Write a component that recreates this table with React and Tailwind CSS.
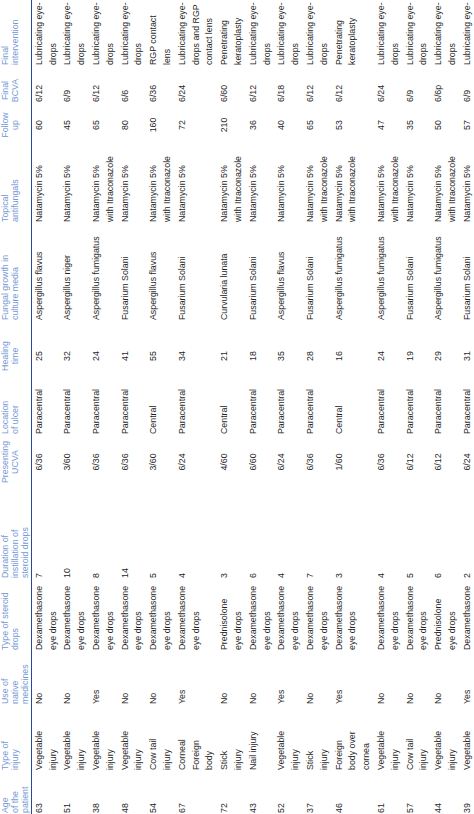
import React from "react";

const D = ["Dexamethasone", "eye drops"];
const P = ["Prednisolone", "eye drops"];
const VI = ["Vegetable", "injury"];
const NAT = ["Natamycin 5%"];
const NATI = ["Natamycin 5%", "with Itraconazole"];
const LUB = ["Lubricating eye-", "drops"];
const PK = ["Penetrating", "keratoplasty"];

const rows = [
  ["63", VI, "No", D, "7", "6/36", "Paracentral", "25", "Aspergillus flavus", NAT, "60", "6/12", LUB],
  ["51", VI, "No", D, "10", "3/60", "Paracentral", "32", "Aspergillus niger", NAT, "45", "6/9", LUB],
  ["38", VI, "Yes", D, "8", "6/36", "Paracentral", "24", "Aspergillus fumigatus", NATI, "65", "6/12", LUB],
  ["48", VI, "No", D, "14", "6/36", "Paracentral", "41", "Fusarium Solani", NAT, "80", "6/6", LUB],
  ["54", ["Cow tail", "injury"], "No", D, "5", "3/60", "Central", "55", "Aspergillus flavus", NATI, "160", "6/36", ["RGP contact", "lens"]],
  ["67", ["Corneal", "Foreign", "body"], "Yes", D, "4", "6/24", "Paracentral", "34", "Fusarium Solani", NAT, "72", "6/24", ["Lubricating eye-", "drops and RGP", "contact lens"]],
  ["72", ["Stick", "injury"], "No", P, "3", "4/60", "Central", "21", "Curvularia lunata", NATI, "210", "6/60", PK],
  ["43", ["Nail injury"], "No", D, "6", "6/60", "Paracentral", "18", "Fusarium Solani", NAT, "36", "6/12", LUB],
  ["52", VI, "Yes", D, "4", "6/24", "Paracentral", "35", "Aspergillus flavus", NAT, "40", "6/18", LUB],
  ["37", ["Stick", "injury"], "No", D, "7", "6/36", "Paracentral", "28", "Fusarium Solani", NATI, "65", "6/12", LUB],
  ["46", ["Foreign", "body over", "cornea"], "Yes", D, "3", "1/60", "Central", "16", "Aspergillus fumigatus", NATI, "53", "6/12", PK],
  ["61", VI, "No", D, "4", "6/36", "Paracentral", "24", "Aspergillus fumigatus", NATI, "47", "6/24", LUB],
  ["57", ["Cow tail", "injury"], "No", D, "5", "6/12", "Paracentral", "19", "Fusarium Solani", NAT, "35", "6/9", LUB],
  ["44", VI, "No", P, "6", "6/12", "Paracentral", "29", "Aspergillus fumigatus", NATI, "50", "6/6p", LUB],
  ["39", VI, "Yes", D, "2", "6/24", "Paracentral", "31", "Fusarium Solani", NATI, "57", "6/9", LUB],
];

const cols = [
  { w: 44, h: ["Age", "of the", "patient"], hc: "pl-[1px] text-left", dc: "pl-[1px] text-left" },
  { w: 66, h: ["Type of", "injury"], hc: "text-left", dc: "text-left" },
  { w: 54, h: ["Use of", "native", "medicines"], hc: "text-left", dc: "text-left" },
  { w: 72, h: ["Type of steroid", "drops"], hc: "text-left", dc: "text-left" },
  { w: 90, h: ["Duration of", "instillation of", "steroid drops"], hc: "text-left", dc: "text-left" },
  { w: 54, h: ["Presenting", "UCVA"], hc: "pr-[2px] text-center", dc: "pr-[2px] text-center" },
  { w: 60, h: ["Location", "of ulcer"], hc: "text-left", dc: "text-left" },
  { w: 54, h: ["Healing", "time"], hc: "pr-[18px] text-center", dc: "pr-[18px] text-center" },
  { w: 98, h: ["Fungal growth in", "culture media"], hc: "text-left", dc: "text-left" },
  { w: 80, h: ["Topical", "antifungals"], hc: "text-left", dc: "text-left" },
  { w: 34, h: ["Follow", "up"], hc: "text-center", dc: "text-center" },
  { w: 43, h: ["Final", "BCVA"], hc: "pr-[8px] text-center", dc: "pl-[6px] text-left" },
  { w: 91, h: ["Final", "intervention"], hc: "text-left", dc: "text-left" },
];

function Lines({ v }) {
  const arr = Array.isArray(v) ? v : [v];
  return arr.map((t, i) => (
    <div key={i} className="whitespace-nowrap">
      {t}
    </div>
  ));
}

export default function App() {
  return (
    <div className="w-[474px] h-[814px] overflow-hidden bg-white">
      <div className="w-[814px] h-[474px] origin-top-left [transform:translateY(814px)_rotate(-90deg)] overflow-hidden bg-white font-['Liberation_Sans',Arial,sans-serif]">
        <table className="table-fixed border-collapse w-[840px]">
          <colgroup>
            {cols.map((c, i) => (
              <col key={i} style={{ width: c.w }} />
            ))}
          </colgroup>
          <thead>
            <tr className="border-b-[1.5px] border-[#2a4a99]">
              {cols.map((c, i) => (
                <th
                  key={i}
                  className={`align-top p-0 pt-[1px] pb-[1px] font-normal text-[8.8px] leading-[9.8px] text-[#7598d2] ${c.hc}`}
                >
                  <Lines v={c.h} />
                </th>
              ))}
            </tr>
          </thead>
          <tbody>
            {rows.map((r, ri) => (
              <tr key={ri}>
                {r.map((v, ci) => (
                  <td
                    key={ci}
                    className={`align-top p-0 py-[0.5px] text-[8.8px] leading-[13.8px] text-[#1f1f1f] ${cols[ci].dc}`}
                  >
                    <Lines v={v} />
                  </td>
                ))}
              </tr>
            ))}
          </tbody>
        </table>
      </div>
    </div>
  );
}
